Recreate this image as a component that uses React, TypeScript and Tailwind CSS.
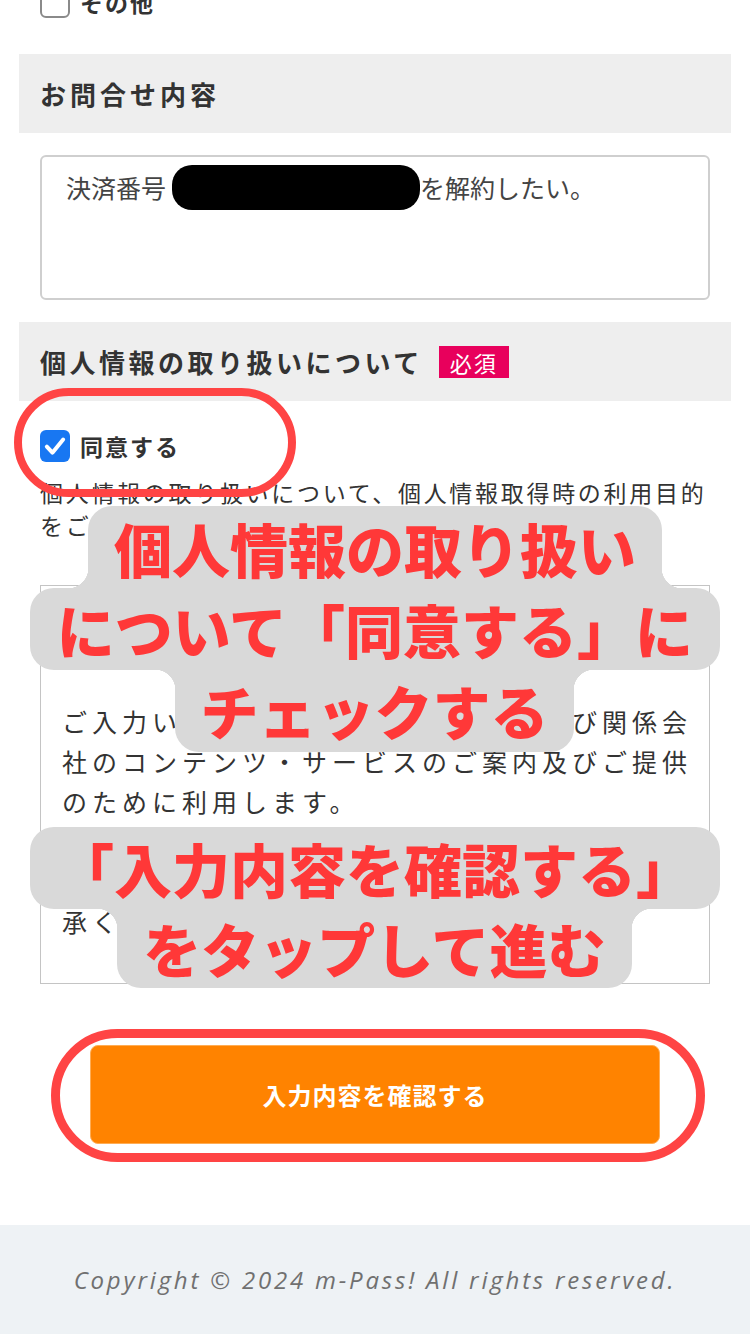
export default function App() {
  const bubble =
    "absolute flex items-center justify-center bg-[#d9d9d9] text-[58px] font-black leading-none text-[#ff3838] whitespace-nowrap";
  const fillet = "absolute h-[20px] w-[20px]";
  return (
    <div className="relative h-[1334px] w-[750px] overflow-hidden bg-white font-['Noto_Sans_CJK_JP','Noto_Sans',sans-serif] text-[#333]">
      {/* その他 row */}
      <div className="ml-[40px] mt-[-13px] flex h-[31px] items-center gap-[10px]">
        <div className="h-[31px] w-[30px] rounded-[6px] border-2 border-[#8a8a8a] bg-white" />
        <span className="text-[23px] font-bold tracking-[2px]">その他</span>
      </div>

      {/* お問合せ内容 */}
      <div className="mx-[19px] mt-[36px] flex h-[79px] items-center bg-[#eeeeee] pl-[21px]">
        <span className="text-[26px] font-bold tracking-[4px]">お問合せ内容</span>
      </div>

      <div className="mx-[40px] mt-[22px] h-[145px] rounded-[6px] border-2 border-[#cfcfcf] pl-[24px] pt-[8px]">
        <div className="flex h-[45px] items-center text-[25px] text-[#444]">
          <span>決済番号</span>
          <span className="ml-[6px] h-[45px] w-[248px] rounded-[20px] bg-black" />
          <span>を解約したい。</span>
        </div>
      </div>

      {/* 個人情報 header */}
      <div className="mx-[19px] mt-[22px] flex h-[79px] items-center bg-[#eeeeee] pl-[21px]">
        <span className="text-[26px] font-bold tracking-[3.5px]">個人情報の取り扱いについて</span>
        <span className="ml-[16px] flex h-[32px] w-[70px] items-center justify-center bg-[#e8005c] text-[22px] leading-none tracking-[2px] text-white">
          必須
        </span>
      </div>

      {/* 同意する */}
      <div className="ml-[40px] mt-[29px] flex h-[32px] items-center gap-[10px]">
        <div className="flex h-[32px] w-[30px] items-center justify-center rounded-[6px] bg-[#1877f2]">
          <svg viewBox="0 0 24 24" className="h-[28px] w-[28px]" fill="none">
            <path d="M5 12.5l4.8 5.2L19 6.5" stroke="white" strokeWidth="3.4" strokeLinecap="round" strokeLinejoin="round" />
          </svg>
        </div>
        <span className="text-[23px] font-bold tracking-[2px]">同意する</span>
      </div>

      <div className="ml-[40px] mt-[14px] whitespace-nowrap text-[23px] leading-[33px] tracking-[2.7px]">
        <div>個人情報の取り扱いについて、個人情報取得時の利用目的</div>
        <div>をご確認のうえ、同意してください。</div>
      </div>

      {/* policy box */}
      <div className="mx-[40px] mt-[43px] h-[399px] overflow-hidden whitespace-nowrap border border-[#c4c4c4] pl-[21px] pt-[35px] text-[25px] leading-[40px] tracking-[5px] text-[#333]">
        <div>【個人情報の利用目的について】</div>
        <div>&nbsp;</div>
        <div>ご入力いただいた個人情報は、当社及び関係会</div>
        <div>社のコンテンツ・サービスのご案内及びご提供</div>
        <div>のために利用します。</div>
        <div>※同意いただけない場合は、お問合せを</div>
        <div>受け付けることができませんので、ご了</div>
        <div>承ください。</div>
      </div>

      {/* button */}
      <div className="mx-[90px] mt-[61px] flex h-[99px] items-center justify-center rounded-[8px] border border-[#ffad55] bg-[#ff8300] text-[24px] font-bold tracking-[1px] text-white">
        入力内容を確認する
      </div>

      {/* footer */}
      <div className="mt-[81px] flex h-[110px] items-center justify-center bg-[#eef2f5] font-['Open_Sans',sans-serif] text-[24px] italic tracking-[2.8px] text-[#707070]">
        Copyright © 2024 m-Pass! All rights reserved.
      </div>

      {/* red annotation rings */}
      <div className="absolute left-[14px] top-[388px] h-[109px] w-[282px] rounded-full border-[8px] border-[#ff4444]" />
      <div className="absolute left-[51px] top-[1029px] h-[133px] w-[654px] rounded-full border-[9px] border-[#ff4444]" />

      {/* overlay bubbles */}
      <div className={`${bubble} left-[88px] top-[506px] h-[84px] w-[574px] rounded-t-[24px]`}>個人情報の取り扱い</div>
      <div className={`${fillet} left-[68px] top-[568px] bg-[image:radial-gradient(circle_at_0_0,transparent_20px,#d9d9d9_20.5px)]`} />
      <div className={`${fillet} left-[662px] top-[568px] bg-[image:radial-gradient(circle_at_100%_0,transparent_20px,#d9d9d9_20.5px)]`} />
      <div className={`${bubble} left-[30px] top-[588px] h-[82px] w-[690px] rounded-[24px]`}>について「同意する」に</div>
      <div className={`${bubble} left-[175px] top-[668px] h-[84px] w-[399px] rounded-b-[24px]`}>チェックする</div>
      <div className={`${fillet} left-[155px] top-[670px] bg-[image:radial-gradient(circle_at_0_100%,transparent_20px,#d9d9d9_20.5px)]`} />
      <div className={`${fillet} left-[574px] top-[670px] bg-[image:radial-gradient(circle_at_100%_100%,transparent_20px,#d9d9d9_20.5px)]`} />

      <div className={`${bubble} left-[30px] top-[827px] h-[82px] w-[690px] rounded-[24px]`}>「入力内容を確認する」</div>
      <div className={`${bubble} left-[117px] top-[907px] h-[81px] w-[515px] rounded-b-[24px]`}>をタップして進む</div>
      <div className={`${fillet} left-[97px] top-[909px] bg-[image:radial-gradient(circle_at_0_100%,transparent_20px,#d9d9d9_20.5px)]`} />
      <div className={`${fillet} left-[632px] top-[909px] bg-[image:radial-gradient(circle_at_100%_100%,transparent_20px,#d9d9d9_20.5px)]`} />
    </div>
  );
}
